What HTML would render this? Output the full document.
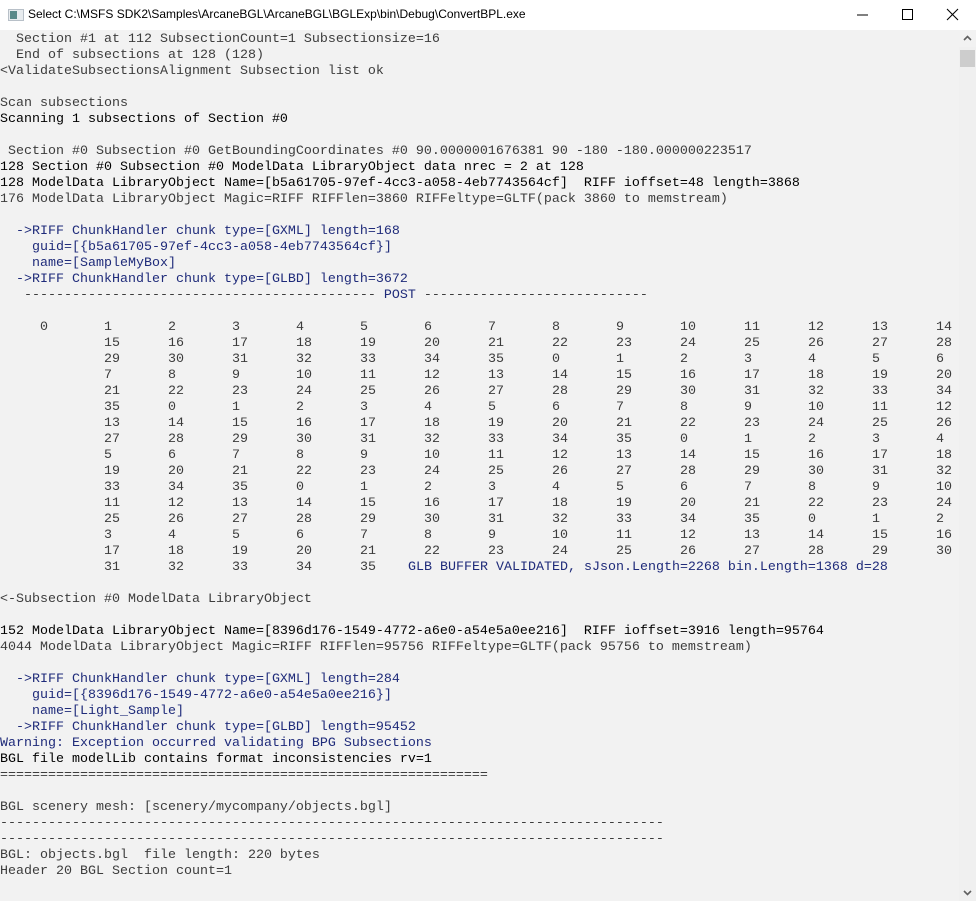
<!DOCTYPE html>
<html><head><meta charset="utf-8">
<style>
html,body{margin:0;padding:0;width:976px;height:901px;overflow:hidden;background:#f2f2f2;}
#title{position:absolute;left:0;top:0;width:976px;height:30px;background:#fff;}
#title .t{position:absolute;left:28px;top:7px;font:12px "Liberation Sans",sans-serif;color:#000;}
#icon{position:absolute;left:8px;top:9px;width:14px;height:10px;border:1px solid #b8c0c8;background:#e8ecef;}
#icon:before{content:"";position:absolute;left:1px;top:1px;width:7px;height:8px;background:#5a8a8a;}
#con{position:absolute;left:0;top:32px;width:959px;height:869px;overflow:hidden;}
.l{position:absolute;left:0;height:16px;line-height:16px;white-space:pre;font:13.33px/16px "Liberation Mono",monospace;color:#3c3c3c;}
.k{color:#000;}
.b{color:#1f2b7a;}
.n{padding-left:104px;}
.n span{display:inline-block;width:64px;}
#sb{position:absolute;left:959px;top:47px;width:17px;height:854px;background:#f0f0f0;}
#thumb{position:absolute;left:960px;top:50px;width:15px;height:17px;background:#cdcdcd;}
</style></head><body>
<div id="title"><div id="icon"></div><div class="t">Select C:\MSFS SDK2\Samples\ArcaneBGL\ArcaneBGL\BGLExp\bin\Debug\ConvertBPL.exe</div>
<svg style="position:absolute;left:850px;top:4px" width="120" height="22">
<line x1="7" y1="11" x2="18" y2="11" stroke="#000" stroke-width="1"/>
<rect x="52.5" y="5.5" width="10" height="10" fill="none" stroke="#000" stroke-width="1"/>
<line x1="97" y1="5" x2="108" y2="16" stroke="#000" stroke-width="1.1"/>
<line x1="108" y1="5" x2="97" y2="16" stroke="#000" stroke-width="1.1"/>
</svg></div>
<div id="sb"></div><div id="thumb"></div>
<svg style="position:absolute;left:959px;top:30px" width="17" height="17"><polyline points="5,10 8.5,6.5 12,10" fill="none" stroke="#606060" stroke-width="1.6"/></svg>
<svg style="position:absolute;left:959px;top:884px" width="17" height="17"><polyline points="5,7 8.5,10.5 12,7" fill="none" stroke="#606060" stroke-width="1.6"/></svg>
<div id="con">
<div class="l" style="top:0">  Section #1 at 112 SubsectionCount=1 Subsectionsize=16</div>
<div class="l" style="top:16px">  End of subsections at 128 (128)</div>
<div class="l" style="top:32px">&lt;ValidateSubsectionsAlignment Subsection list ok</div>
<div class="l" style="top:64px">Scan subsections</div>
<div class="l k" style="top:80px">Scanning 1 subsections of Section #0</div>
<div class="l" style="top:112px"> Section #0 Subsection #0 GetBoundingCoordinates #0 90.0000001676381 90 -180 -180.000000223517</div>
<div class="l k" style="top:128px">128 Section #0 Subsection #0 ModelData LibraryObject data nrec = 2 at 128</div>
<div class="l k" style="top:144px">128 ModelData LibraryObject Name=[b5a61705-97ef-4cc3-a058-4eb7743564cf]  RIFF ioffset=48 length=3868</div>
<div class="l" style="top:160px">176 ModelData LibraryObject Magic=RIFF RIFFlen=3860 RIFFeltype=GLTF(pack 3860 to memstream)</div>
<div class="l b" style="top:192px">  -&gt;RIFF ChunkHandler chunk type=[GXML] length=168</div>
<div class="l b" style="top:208px">    guid=[{b5a61705-97ef-4cc3-a058-4eb7743564cf}]</div>
<div class="l b" style="top:224px">    name=[SampleMyBox]</div>
<div class="l b" style="top:240px">  -&gt;RIFF ChunkHandler chunk type=[GLBD] length=3672</div>
<div class="l" style="top:256px">   -------------------------------------------- <span class="b">POST</span> ----------------------------</div>
<div class="l" style="top:288px;left:40px">0</div>
<div class="l n" style="top:288px"><span>1</span><span>2</span><span>3</span><span>4</span><span>5</span><span>6</span><span>7</span><span>8</span><span>9</span><span>10</span><span>11</span><span>12</span><span>13</span><span>14</span></div>
<div class="l n" style="top:304px"><span>15</span><span>16</span><span>17</span><span>18</span><span>19</span><span>20</span><span>21</span><span>22</span><span>23</span><span>24</span><span>25</span><span>26</span><span>27</span><span>28</span></div>
<div class="l n" style="top:320px"><span>29</span><span>30</span><span>31</span><span>32</span><span>33</span><span>34</span><span>35</span><span>0</span><span>1</span><span>2</span><span>3</span><span>4</span><span>5</span><span>6</span></div>
<div class="l n" style="top:336px"><span>7</span><span>8</span><span>9</span><span>10</span><span>11</span><span>12</span><span>13</span><span>14</span><span>15</span><span>16</span><span>17</span><span>18</span><span>19</span><span>20</span></div>
<div class="l n" style="top:352px"><span>21</span><span>22</span><span>23</span><span>24</span><span>25</span><span>26</span><span>27</span><span>28</span><span>29</span><span>30</span><span>31</span><span>32</span><span>33</span><span>34</span></div>
<div class="l n" style="top:368px"><span>35</span><span>0</span><span>1</span><span>2</span><span>3</span><span>4</span><span>5</span><span>6</span><span>7</span><span>8</span><span>9</span><span>10</span><span>11</span><span>12</span></div>
<div class="l n" style="top:384px"><span>13</span><span>14</span><span>15</span><span>16</span><span>17</span><span>18</span><span>19</span><span>20</span><span>21</span><span>22</span><span>23</span><span>24</span><span>25</span><span>26</span></div>
<div class="l n" style="top:400px"><span>27</span><span>28</span><span>29</span><span>30</span><span>31</span><span>32</span><span>33</span><span>34</span><span>35</span><span>0</span><span>1</span><span>2</span><span>3</span><span>4</span></div>
<div class="l n" style="top:416px"><span>5</span><span>6</span><span>7</span><span>8</span><span>9</span><span>10</span><span>11</span><span>12</span><span>13</span><span>14</span><span>15</span><span>16</span><span>17</span><span>18</span></div>
<div class="l n" style="top:432px"><span>19</span><span>20</span><span>21</span><span>22</span><span>23</span><span>24</span><span>25</span><span>26</span><span>27</span><span>28</span><span>29</span><span>30</span><span>31</span><span>32</span></div>
<div class="l n" style="top:448px"><span>33</span><span>34</span><span>35</span><span>0</span><span>1</span><span>2</span><span>3</span><span>4</span><span>5</span><span>6</span><span>7</span><span>8</span><span>9</span><span>10</span></div>
<div class="l n" style="top:464px"><span>11</span><span>12</span><span>13</span><span>14</span><span>15</span><span>16</span><span>17</span><span>18</span><span>19</span><span>20</span><span>21</span><span>22</span><span>23</span><span>24</span></div>
<div class="l n" style="top:480px"><span>25</span><span>26</span><span>27</span><span>28</span><span>29</span><span>30</span><span>31</span><span>32</span><span>33</span><span>34</span><span>35</span><span>0</span><span>1</span><span>2</span></div>
<div class="l n" style="top:496px"><span>3</span><span>4</span><span>5</span><span>6</span><span>7</span><span>8</span><span>9</span><span>10</span><span>11</span><span>12</span><span>13</span><span>14</span><span>15</span><span>16</span></div>
<div class="l n" style="top:512px"><span>17</span><span>18</span><span>19</span><span>20</span><span>21</span><span>22</span><span>23</span><span>24</span><span>25</span><span>26</span><span>27</span><span>28</span><span>29</span><span>30</span></div>
<div class="l n" style="top:528px"><span>31</span><span>32</span><span>33</span><span>34</span><span>35</span></div>
<div class="l b" style="top:528px;left:408px">GLB BUFFER VALIDATED, sJson.Length=2268 bin.Length=1368 d=28</div>
<div class="l" style="top:560px">&lt;-Subsection #0 ModelData LibraryObject</div>
<div class="l k" style="top:592px">152 ModelData LibraryObject Name=[8396d176-1549-4772-a6e0-a54e5a0ee216]  RIFF ioffset=3916 length=95764</div>
<div class="l" style="top:608px">4044 ModelData LibraryObject Magic=RIFF RIFFlen=95756 RIFFeltype=GLTF(pack 95756 to memstream)</div>
<div class="l b" style="top:640px">  -&gt;RIFF ChunkHandler chunk type=[GXML] length=284</div>
<div class="l b" style="top:656px">    guid=[{8396d176-1549-4772-a6e0-a54e5a0ee216}]</div>
<div class="l b" style="top:672px">    name=[Light_Sample]</div>
<div class="l b" style="top:688px">  -&gt;RIFF ChunkHandler chunk type=[GLBD] length=95452</div>
<div class="l b" style="top:704px">Warning: Exception occurred validating BPG Subsections</div>
<div class="l k" style="top:720px">BGL file modelLib contains format inconsistencies rv=1</div>
<div class="l" style="top:736px">=============================================================</div>
<div class="l" style="top:768px">BGL scenery mesh: [scenery/mycompany/objects.bgl]</div>
<div class="l" style="top:784px">-----------------------------------------------------------------------------------</div>
<div class="l" style="top:800px">-----------------------------------------------------------------------------------</div>
<div class="l" style="top:816px">BGL: objects.bgl  file length: 220 bytes</div>
<div class="l" style="top:832px">Header 20 BGL Section count=1</div>
</div>
</body></html>
